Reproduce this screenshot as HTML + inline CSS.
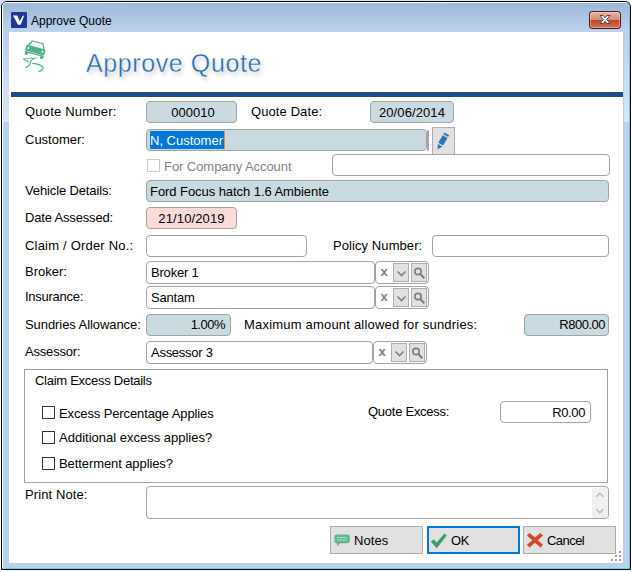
<!DOCTYPE html>
<html><head><meta charset="utf-8">
<style>
*{box-sizing:border-box;margin:0;padding:0}
html,body{width:631px;height:572px;overflow:hidden}
body{position:relative;background:#fff;font-family:"Liberation Sans",sans-serif;font-size:13px;color:#000}
.abs{position:absolute}
#bgtop{left:0;top:0;width:631px;height:8px;background:linear-gradient(90deg,#d0dfee,#dfe9f3 60%,#f0f4f9)}
#frame{left:1px;top:1px;width:630px;height:569px;background:#b9d1ea;border:1px solid #000;border-radius:6px 6px 0 0}
#hl{left:2px;top:2px;width:627px;height:567px;border:1px solid #fff;border-bottom:0;border-right:0;border-radius:5px 5px 0 0}
#titlegrad{left:3px;top:3px;width:626px;height:29px;border-radius:4px 4px 0 0;background:linear-gradient(#9db8d8,#bdd3ec)}
#lside{left:3px;top:31px;width:6px;height:91px;background:linear-gradient(#b7cfe9,#dbe8f5)}
#rside{left:624px;top:31px;width:5px;height:91px;background:linear-gradient(#b7cfe9,#dbe8f5)}
#cyanr{left:629px;top:6px;width:1px;height:563px;background:#4fd6fa}
#cyanb{left:2px;top:568px;width:628px;height:1px;background:#4fd6fa}
#client{left:9px;top:32px;width:614px;height:531px;background:#fff}
#ttl{left:31px;top:14px;font-size:12px;line-height:15px;color:#000}
#bar{left:11px;top:92px;width:612px;height:5px;background:#1e4e85}
#h1{left:86px;top:46px;font-size:25px;letter-spacing:.6px;line-height:34px;color:#2269b2;-webkit-text-stroke:.35px #fff;text-shadow:2px 3px 4px rgba(0,0,0,.2);white-space:nowrap}
.lbl{position:absolute;white-space:nowrap;line-height:16px;font-size:13px}
.fld{position:absolute;border:1px solid #a3a3a3;border-radius:4px;background:#fff;line-height:20px;font-size:13px;white-space:nowrap;overflow:hidden}
.ro{background:#c9dbe0}
.c{text-align:center;padding-left:1px}.r{text-align:right;padding-right:4px}.l{padding-left:4px}
.cb{position:absolute;width:13px;height:13px;border:1px solid #333;background:#fff}
.btn{position:absolute;height:28px;border:1px solid #adadad;background:#e1e1e1;font-size:13px;line-height:28px}
.grp{position:absolute;width:54px;height:23px;border:1px solid #a3a3a3;border-radius:4px;background:#fff}
.grp i{position:absolute;top:1px;height:19px;width:16px;background:#e1e1e1;border:1px solid #adadad}
.grp b{position:absolute;left:4.5px;top:0;font-size:13px;font-weight:bold;line-height:20px;color:#808080}
.grp svg{position:absolute;left:0;top:0}
</style></head><body>
<div id="bgtop" class="abs"></div>
<div id="frame" class="abs"></div>
<div id="hl" class="abs"></div>
<div id="titlegrad" class="abs"></div>
<div id="lside" class="abs"></div>
<div id="rside" class="abs"></div>
<div id="cyanr" class="abs"></div>
<div id="cyanb" class="abs"></div>
<div id="client" class="abs"></div>

<svg class="abs" style="left:11px;top:12px" width="16" height="16" viewBox="0 0 16 16"><rect width="16" height="16" rx="1.3" fill="#1b3a94"/><polygon points="2,3.5 6.3,3.5 8.7,9.2 11.6,3.9 13.2,3.6 9.6,12.7 7,12.7" fill="#fff"/></svg>
<div id="ttl" class="abs">Approve Quote</div>

<div class="abs" id="close" style="left:589px;top:11px;width:32px;height:18px;border:1px solid #4b1a20;border-radius:3px;background:linear-gradient(#e8b1a3 0%,#d88b79 48%,#c0401f 50%,#d4755c 100%);box-shadow:inset 0 0 0 1px rgba(255,255,255,.35)"></div>
<svg class="abs" style="left:598px;top:14px" width="14" height="11" viewBox="0 0 14 11"><path d="M2,1.5 L5,1.5 L7,3.7 L9,1.5 L12,1.5 L8.7,5.5 L12,9.5 L9,9.5 L7,7.3 L5,9.5 L2,9.5 L5.3,5.5 Z" fill="#fff" stroke="#3d4a5e" stroke-width="1" stroke-linejoin="round"/></svg>

<svg class="abs" style="left:14px;top:36px" width="40" height="44" viewBox="0 0 520 572">
<g transform="translate(280,175) rotate(15)" fill="#4fb088">
<path d="M-76,-104 L80,-104 L120,-22 L-120,-22 Z"/>
<path d="M-63,-91 L67,-91 L96,-33 L-94,-33 Z" fill="#fff"/>
<rect x="-128" y="-28" width="256" height="73" rx="10"/>
<rect x="-105" y="-7" width="22" height="24" fill="#fff"/>
<rect x="85" y="-7" width="22" height="24" fill="#fff"/>
<rect x="-126" y="52" width="252" height="17"/>
<rect x="-122" y="60" width="40" height="38" rx="5"/>
<rect x="84" y="60" width="40" height="38" rx="5"/>
</g>
<g fill="none" stroke="#4fb088" stroke-linecap="round">
<path d="M124,299 Q200,281 288,290" stroke-width="11"/>
<path d="M127,302 Q165,316 188,336" stroke-width="14"/>
<path d="M262,292 Q215,310 215,345 Q205,385 154,410" stroke-width="14"/>
<path d="M244,357 Q340,365 378,405 Q386,440 324,463" stroke-width="17"/>
</g></svg>

<div id="h1" class="abs">Approve Quote</div>
<div id="bar" class="abs"></div>

<div class="lbl" id="l1" style="letter-spacing:0.2px;left:25px;top:104px">Quote Number:</div>
<div class="fld ro c" style="left:146px;top:101px;width:91px;height:22px;line-height:21px;padding-left:3px"><span id="f1">000010</span></div>
<div class="lbl" id="l2" style="letter-spacing:0.1px;left:251px;top:104px">Quote Date:</div>
<div class="fld ro c" style="left:370px;top:101px;width:84px;height:22px;line-height:21px;padding-left:0;letter-spacing:.1px"><span id="f2">20/06/2014</span></div>

<div class="lbl" id="l3" style="left:25px;top:132px">Customer:</div>
<div class="fld ro" style="left:146px;top:129px;width:281px;height:22px;padding-left:3px"><span style="display:inline-block;margin-top:1px;height:18px;line-height:19px;background:#0078d7;color:#fff;padding-left:0;padding-right:1px;border-right:1px solid #ff8728;vertical-align:top" id="f3">N, Customer</span></div>
<div class="abs" style="left:427px;top:130px;width:2px;height:21px;background:#a8a8a8;border-radius:1px"></div>
<div class="btn" style="left:432px;top:127px;width:23px;height:28px"></div>
<svg class="abs" style="left:432px;top:127px" width="23" height="28" viewBox="0 0 23 28"><g transform="translate(10.1,14.8) rotate(30)" fill="#2e75b6"><rect x="-2.8" y="-9.2" width="5.6" height="2"/><rect x="-2.8" y="-5.9" width="5.6" height="8.6"/><path d="M-2.6,4 L2.6,4 L0,9 Z"/></g></svg>

<div class="cb" style="left:147px;top:159px;border-color:#ccc"></div>
<div class="lbl" id="l4" style="letter-spacing:-.06px;left:164px;top:159px;color:#838383">For Company Account</div>
<div class="fld" style="left:332px;top:154px;width:278px;height:22px"></div>

<div class="lbl" id="l5" style="letter-spacing:-0.13px;left:25px;top:183px">Vehicle Details:</div>
<div class="fld ro l" style="left:146px;top:180px;width:463px;height:22px;line-height:21px;padding-left:3px;letter-spacing:-.06px"><span id="f4">Ford Focus hatch 1.6 Ambiente</span></div>

<div class="lbl" id="l6" style="letter-spacing:-0.17px;left:25px;top:210px">Date Assessed:</div>
<div class="fld c" style="left:146px;top:207px;width:91px;height:22px;background:#fbdada;line-height:21px;padding-left:0;letter-spacing:.12px"><span id="f5">21/10/2019</span></div>

<div class="lbl" id="l7" style="letter-spacing:0.2px;left:25px;top:238px">Claim / Order No.:</div>
<div class="fld" style="left:146px;top:235px;width:161px;height:22px"></div>
<div class="lbl" id="l8" style="letter-spacing:0.08px;left:333px;top:238px">Policy Number:</div>
<div class="fld" style="left:432px;top:235px;width:177px;height:22px"></div>

<div class="lbl" id="l9" style="left:25px;top:264px">Broker:</div>
<div class="fld l" style="left:146px;top:261px;width:229px;height:23px;line-height:22px;letter-spacing:-.2px;padding-left:4px"><span id="f6">Broker 1</span></div>
<div class="grp" style="left:375px;top:261px"><b>x</b><i style="left:17px"></i><i style="left:35px"></i>
<svg width="54" height="23" viewBox="0 0 54 23"><path d="M21.5,9.5 L25.5,13.5 L29.5,9.5" fill="none" stroke="#808080" stroke-width="1.6"/><circle cx="42" cy="9.5" r="3.2" fill="none" stroke="#808080" stroke-width="1.7"/><path d="M44.3,12 L48.3,16.3" stroke="#808080" stroke-width="2.2"/></svg></div>

<div class="lbl" id="l10" style="letter-spacing:-0.27px;left:25px;top:289px">Insurance:</div>
<div class="fld l" style="left:146px;top:286px;width:229px;height:23px;line-height:22px;letter-spacing:-.2px;padding-left:4px"><span id="f7">Santam</span></div>
<div class="grp" style="left:375px;top:286px"><b>x</b><i style="left:17px"></i><i style="left:35px"></i>
<svg width="54" height="23" viewBox="0 0 54 23"><path d="M21.5,9.5 L25.5,13.5 L29.5,9.5" fill="none" stroke="#808080" stroke-width="1.6"/><circle cx="42" cy="9.5" r="3.2" fill="none" stroke="#808080" stroke-width="1.7"/><path d="M44.3,12 L48.3,16.3" stroke="#808080" stroke-width="2.2"/></svg></div>

<div class="lbl" id="l11" style="letter-spacing:-0.07px;left:25px;top:317px">Sundries Allowance:</div>
<div class="fld ro r" style="left:146px;top:314px;width:85px;height:22px;letter-spacing:-.5px;padding-right:5px"><span id="f8">1.00%</span></div>
<div class="lbl" id="l12" style="letter-spacing:0.2px;left:244px;top:317px">Maximum amount allowed for sundries:</div>
<div class="fld ro r" style="left:524px;top:314px;width:85px;height:22px;letter-spacing:-.5px;padding-right:3px"><span id="f9">R800.00</span></div>

<div class="lbl" id="l13" style="letter-spacing:-0.19px;left:25px;top:344px">Assessor:</div>
<div class="fld l" style="left:146px;top:341px;width:227px;height:23px;line-height:22px;letter-spacing:-.27px;padding-left:4px"><span id="f10">Assessor 3</span></div>
<div class="grp" style="left:373px;top:341px"><b>x</b><i style="left:17px"></i><i style="left:35px"></i>
<svg width="54" height="23" viewBox="0 0 54 23"><path d="M21.5,9.5 L25.5,13.5 L29.5,9.5" fill="none" stroke="#808080" stroke-width="1.6"/><circle cx="42" cy="9.5" r="3.2" fill="none" stroke="#808080" stroke-width="1.7"/><path d="M44.3,12 L48.3,16.3" stroke="#808080" stroke-width="2.2"/></svg></div>

<div class="abs" style="left:24px;top:369px;width:584px;height:114px;border:1px solid #a0a0a0"></div>
<div class="lbl" id="l14" style="letter-spacing:-0.27px;left:35px;top:373px">Claim Excess Details</div>
<div class="cb" style="left:42px;top:406px"></div><div class="lbl" id="l15" style="letter-spacing:-0.12px;left:59px;top:406px">Excess Percentage Applies</div>
<div class="cb" style="left:42px;top:431px"></div><div class="lbl" id="l16" style="left:59px;top:430px">Additional excess applies?</div>
<div class="cb" style="left:42px;top:457px"></div><div class="lbl" id="l17" style="letter-spacing:-0.09px;left:59px;top:456px">Betterment applies?</div>
<div class="lbl" id="l18" style="letter-spacing:-0.26px;left:368px;top:404px">Quote Excess:</div>
<div class="fld r" style="left:500px;top:401px;width:91px;height:22px;line-height:22px;letter-spacing:-.4px;padding-right:5px"><span id="f11">R0.00</span></div>

<div class="lbl" id="l19" style="letter-spacing:.1px;left:25px;top:487px">Print Note:</div>
<div class="fld" style="left:146px;top:486px;width:463px;height:33px"></div>
<div class="abs" style="left:592px;top:488px;width:16px;height:30px;background:#f0f0f0;border-radius:0 3px 3px 0"></div>
<svg class="abs" style="left:592px;top:488px" width="16" height="30" viewBox="0 0 16 30"><path d="M4.3,8.7 L7.8,5.2 L11.3,8.7 M4.3,21.2 L7.8,24.7 L11.3,21.2" fill="none" stroke="#b8b8b8" stroke-width="1.4"/></svg>

<div class="btn" style="left:330px;top:526px;width:93px"><span id="b1" style="margin-left:23px;letter-spacing:.1px">Notes</span></div>
<svg class="abs" style="left:334px;top:534px" width="17" height="13" viewBox="0 0 17 13"><path d="M2.5,0.5 H13.5 Q15.8,0.5 15.8,2.8 V7 Q15.8,9.3 13.5,9.3 H6 L3,12.3 V9.3 H2.5 Q0.4,9.3 0.4,7 V2.8 Q0.4,0.5 2.5,0.5 Z" fill="#5cb88a"/><path d="M3,3.5 H13 M3,6 H13" stroke="#c9ebd9" stroke-width="1.2" stroke-dasharray="2.2,0.6"/></svg>
<div class="btn" style="left:427px;top:526px;width:93px;border:2px solid #0078d7;line-height:26px"><span id="b2" style="margin-left:22px;letter-spacing:-.4px">OK</span></div>
<svg class="abs" style="left:430px;top:533px" width="18" height="16" viewBox="0 0 18 16"><path d="M0.8,8.8 L3.8,6.2 L6.6,9.6 L14.4,0.6 L16.8,2.6 L6.8,15.2 Z" fill="#3c9d6d"/></svg>
<div class="btn" style="left:523px;top:526px;width:93px"><span id="b3" style="margin-left:23px;letter-spacing:-.55px">Cancel</span></div>
<svg class="abs" style="left:526px;top:532px" width="18" height="16" viewBox="0 0 18 16"><path d="M3.5,1 L9,5.6 L14.5,1 L17,3.6 L11.8,8.2 L17,12.8 L14.5,15.4 L9,10.8 L3.5,15.4 L1,12.8 L6.2,8.2 L1,3.6 Z" fill="#d9452c"/></svg>

<svg class="abs" style="left:610px;top:550px" width="12" height="12" viewBox="0 0 12 12" fill="#a0a0a0"><rect x="9" y="1" width="2" height="2"/><rect x="5" y="5" width="2" height="2"/><rect x="9" y="5" width="2" height="2"/><rect x="1" y="9" width="2" height="2"/><rect x="5" y="9" width="2" height="2"/><rect x="9" y="9" width="2" height="2"/></svg>
</body></html>
